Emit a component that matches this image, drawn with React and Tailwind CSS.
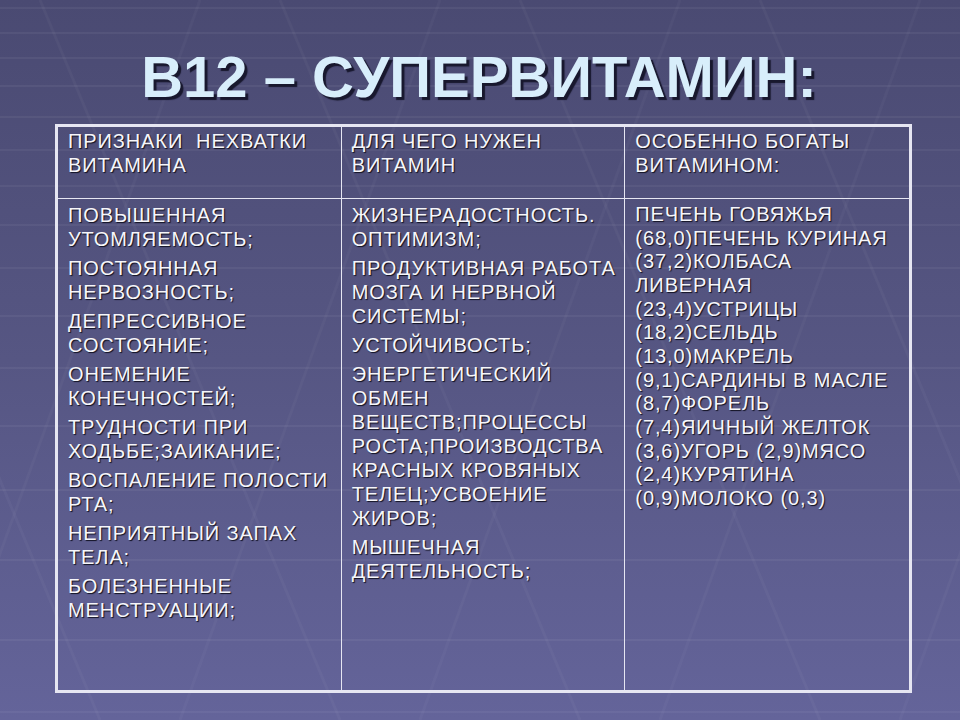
const symptoms = [
  ['ПОВЫШЕННАЯ', 'УТОМЛЯЕМОСТЬ;'],
  ['ПОСТОЯННАЯ', 'НЕРВОЗНОСТЬ;'],
  ['ДЕПРЕССИВНОЕ', 'СОСТОЯНИЕ;'],
  ['ОНЕМЕНИЕ', 'КОНЕЧНОСТЕЙ;'],
  ['ТРУДНОСТИ ПРИ', 'ХОДЬБЕ;ЗАИКАНИЕ;'],
  ['ВОСПАЛЕНИЕ ПОЛОСТИ', 'РТА;'],
  ['НЕПРИЯТНЫЙ ЗАПАХ', 'ТЕЛА;'],
  ['БОЛЕЗНЕННЫЕ', 'МЕНСТРУАЦИИ;'],
];

const uses = [
  ['ЖИЗНЕРАДОСТНОСТЬ.', 'ОПТИМИЗМ;'],
  ['ПРОДУКТИВНАЯ РАБОТА', 'МОЗГА И НЕРВНОЙ', 'СИСТЕМЫ;'],
  ['УСТОЙЧИВОСТЬ;'],
  ['ЭНЕРГЕТИЧЕСКИЙ', 'ОБМЕН', 'ВЕЩЕСТВ;ПРОЦЕССЫ', 'РОСТА;ПРОИЗВОДСТВА', 'КРАСНЫХ КРОВЯНЫХ', 'ТЕЛЕЦ;УСВОЕНИЕ', 'ЖИРОВ;'],
  ['МЫШЕЧНАЯ', 'ДЕЯТЕЛЬНОСТЬ;'],
];

const foods = [
  'ПЕЧЕНЬ ГОВЯЖЬЯ',
  '(68,0)ПЕЧЕНЬ КУРИНАЯ',
  '(37,2)КОЛБАСА',
  'ЛИВЕРНАЯ',
  '(23,4)УСТРИЦЫ',
  '(18,2)СЕЛЬДЬ',
  '(13,0)МАКРЕЛЬ',
  '(9,1)САРДИНЫ В МАСЛЕ',
  '(8,7)ФОРЕЛЬ',
  '(7,4)ЯИЧНЫЙ ЖЕЛТОК',
  '(3,6)УГОРЬ (2,9)МЯСО',
  '(2,4)КУРЯТИНА',
  '(0,9)МОЛОКО (0,3)',
];

function Lines({ lines }) {
  return lines.map((l, i) => (
    <div key={i} className="whitespace-pre">{l}</div>
  ));
}

function Backdrop() {
  // faint perspective grid of the slide template
  const rows = [8, 33, 58, 86, 117, 150, 186, 225, 268, 316, 368, 426, 490, 560, 640, 712];
  return (
    <svg className="absolute inset-0" width="960" height="720" viewBox="0 0 960 720">
      {rows.map((y) => (
        <line key={y} x1="0" y1={y} x2="960" y2={y} stroke="#ffffff" strokeOpacity="0.05" strokeWidth="2" />
      ))}
      {[-200, 40, 280, 520, 760, 1000].map((x) => (
        <line key={x} x1={x} y1="0" x2={x + 300} y2="720" stroke="#ffffff" strokeOpacity="0.035" strokeWidth="3" />
      ))}
      {[200, 440, 680, 920, 1160].map((x) => (
        <line key={x} x1={x} y1="0" x2={x - 260} y2="720" stroke="#ffffff" strokeOpacity="0.03" strokeWidth="3" />
      ))}
    </svg>
  );
}

export default function App() {
  const cell = "px-[10px] text-[20px] tracking-[0.9px] text-[#f6f6fa] [text-shadow:1px_1px_1px_#101020]";

  return (
    <div className="relative w-[960px] h-[720px] overflow-hidden bg-gradient-to-b from-[#4a4a72] via-[#565683] to-[#64649a] font-['Liberation_Sans',Arial,sans-serif]">
      <Backdrop />

      <div className="relative">
        <h1 className="pt-[48px] h-[106px] pr-[2px] text-center text-[58px] leading-none font-bold text-[#d8eefb] [text-shadow:3px_3px_1px_#18182e]">
          B12 – СУПЕРВИТАМИН:
        </h1>

        <div className="mt-[18px] ml-[55px] w-[857px] h-[569px] border-[3px] border-[#e6e6f2] grid grid-cols-3 grid-rows-[72px_1fr]">
          <div className={`${cell} pt-[2px] leading-[24px] border-r border-b border-[#e6e6f2]`}>
            <Lines lines={['ПРИЗНАКИ  НЕХВАТКИ', 'ВИТАМИНА']} />
          </div>
          <div className={`${cell} pt-[2px] leading-[24px] border-r border-b border-[#e6e6f2]`}>
            <Lines lines={['ДЛЯ ЧЕГО НУЖЕН', 'ВИТАМИН']} />
          </div>
          <div className={`${cell} pt-[2px] leading-[24px] border-b border-[#e6e6f2]`}>
            <Lines lines={['ОСОБЕННО БОГАТЫ', 'ВИТАМИНОМ:']} />
          </div>

          <div className={`${cell} pt-[4px] leading-[24px] border-r border-[#e6e6f2] flex flex-col gap-[5px]`}>
            {symptoms.map((p, i) => (
              <div key={i}><Lines lines={p} /></div>
            ))}
          </div>
          <div className={`${cell} pt-[4px] leading-[24px] border-r border-[#e6e6f2] flex flex-col gap-[5px]`}>
            {uses.map((p, i) => (
              <div key={i}><Lines lines={p} /></div>
            ))}
          </div>
          <div className={`${cell} pt-[4px] leading-[23.67px]`}>
            <Lines lines={foods} />
          </div>
        </div>
      </div>
    </div>
  );
}
